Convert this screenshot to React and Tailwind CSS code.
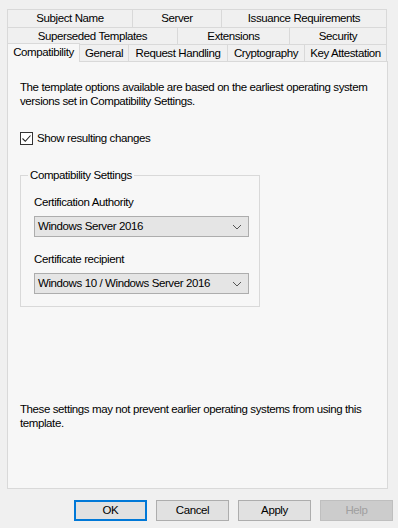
import React from 'react';

const row1 = [
  { label: 'Subject Name', w: 'w-[125px]' },
  { label: 'Server', w: 'w-[89px]' },
  { label: 'Issuance Requirements', w: 'w-[166px]' },
];
const row2 = [
  { label: 'Superseded Templates', w: 'w-[170px]' },
  { label: 'Extensions', w: 'w-[112px]' },
  { label: 'Security', w: 'w-[98px]' },
];
const row3 = [
  { label: 'General', w: 'w-[49px]' },
  { label: 'Request Handling', w: 'w-[99px]' },
  { label: 'Cryptography', w: 'w-[77px]' },
  { label: 'Key Attestation', w: 'w-[82px]' },
];

function Chevron() {
  return (
    <svg width="10" height="6" viewBox="0 0 10 6" fill="none" className="shrink-0">
      <path d="M1 1l4 4 4-4" stroke="#555" strokeWidth="1" />
    </svg>
  );
}

function Combo({ value }) {
  return (
    <div className="flex h-[21px] w-[215px] items-center justify-between border border-[#adadad] bg-[#e5e5e5] pl-[3px] pr-[6px]">
      <span>{value}</span>
      <Chevron />
    </div>
  );
}

function Button({ children, primary, disabled }) {
  const base = 'flex h-[21px] w-[73px] items-center justify-center';
  if (disabled) {
    return <div className={`${base} border border-[#bfbfbf] bg-[#cccccc] text-[#a0a0a0]`}>{children}</div>;
  }
  if (primary) {
    return <div className={`${base} border-2 border-[#0078d7] bg-[#e1e1e1]`}>{children}</div>;
  }
  return <div className={`${base} border border-[#adadad] bg-[#e1e1e1]`}>{children}</div>;
}

export default function App() {
  return (
    <div className="h-[528px] w-[398px] whitespace-nowrap bg-[#f0f0f0] pl-[7px] pt-[9px] text-[11.5px] leading-[13px] tracking-[-0.4px] text-black [font-family:'Liberation_Sans',Arial,sans-serif]">
      {/* back tab rows */}
      <div className="flex h-[18px]">
        {row1.map((t) => (
          <div key={t.label} className={`${t.w} flex items-center justify-center border-l border-t border-[#d9d9d9] last:border-r`}>
            {t.label}
          </div>
        ))}
      </div>
      <div className="flex h-[17px]">
        {row2.map((t) => (
          <div key={t.label} className={`${t.w} flex items-center justify-center border-l border-t border-[#d9d9d9] last:border-r`}>
            {t.label}
          </div>
        ))}
      </div>
      <div className="relative z-10 flex h-[17px] items-end">
        <div className="-mb-px flex h-[19px] w-[73px] items-center justify-center border-x border-t border-[#d9d9d9] bg-[#f7f7f7] pb-[2px]">
          Compatibility
        </div>
        {row3.map((t) => (
          <div key={t.label} className={`${t.w} flex h-[17px] items-center justify-center border-r border-t border-[#d9d9d9]`}>
            {t.label}
          </div>
        ))}
      </div>

      {/* panel */}
      <div className="flex h-[428px] w-[381px] flex-col border border-[#d9d9d9] bg-[#f7f7f7] pl-[12px]">
        <p className="mt-[18px] leading-[14px]">
          The template options available are based on the earliest operating system
          <br />
          versions set in Compatibility Settings.
        </p>

        <div className="mt-[24px] flex items-center gap-[4px]">
          <div className="flex h-[13px] w-[13px] items-center justify-center border border-[#333] bg-white">
            <svg width="11" height="11" viewBox="0 0 11 11" fill="none">
              <path d="M1.5 5.5l2.8 2.8L9.5 2.5" stroke="#222" strokeWidth="1.1" />
            </svg>
          </div>
          <span>Show resulting changes</span>
        </div>

        <fieldset className="mt-[24px] h-[138px] w-[240px] border border-[#d9d9d9] pl-[13px] pr-0">
          <legend className="ml-[-6px] px-[2px]">Compatibility Settings</legend>
          <div className="mt-[14px]">Certification Authority</div>
          <div className="mt-[7px]">
            <Combo value="Windows Server 2016" />
          </div>
          <div className="mt-[16px]">Certificate recipient</div>
          <div className="mt-[7px]">
            <Combo value="Windows 10 / Windows Server 2016" />
          </div>
        </fieldset>

        <p className="mt-[95px] leading-[14px]">
          These settings may not prevent earlier operating systems from using this
          <br />
          template.
        </p>
      </div>

      {/* buttons */}
      <div className="mt-[11px] flex gap-[9px] pl-[67px]">
        <Button primary>OK</Button>
        <Button>Cancel</Button>
        <Button>Apply</Button>
        <Button disabled>Help</Button>
      </div>
    </div>
  );
}
